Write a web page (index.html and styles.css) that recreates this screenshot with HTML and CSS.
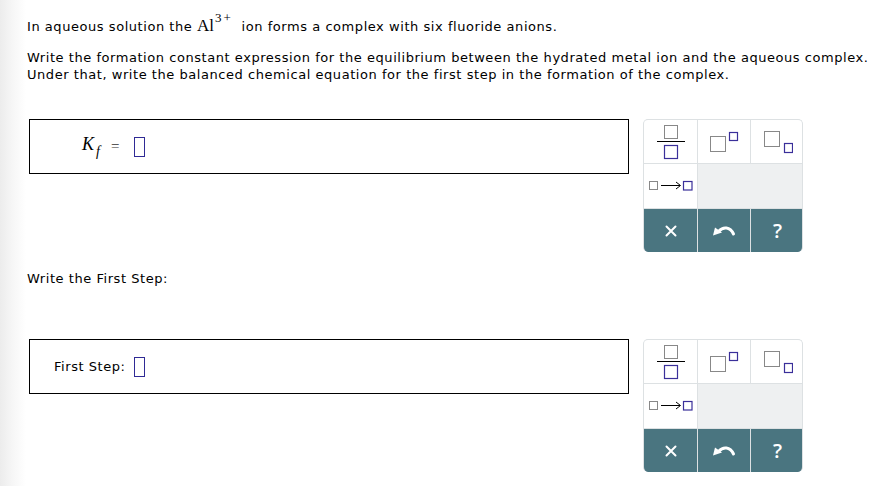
FILE: index.html
```html
<!DOCTYPE html>
<html>
<head>
<meta charset="utf-8">
<link rel="stylesheet" href="styles.css">
</head>
<body>
<div class="page">
  <p class="intro">In aqueous solution the <span class="chem">Al<sup>3+</sup></span> ion forms a complex with six fluoride anions.</p>
  <p class="task">Write the formation constant expression for the equilibrium between the hydrated metal ion and the aqueous complex.<br>Under that, write the balanced chemical equation for the first step in the formation of the complex.</p>

  <div class="answer-row first">
    <div class="answer-box">
      <span class="kf"><i>K</i><sub><i>f</i></sub></span>
      <span class="eq">=</span>
      <span class="slot"></span>
    </div>
    <div class="toolbar">
      <div class="cell">
        <svg width="30" height="36" viewBox="0 0 30 36"><rect x="8.5" y="1.5" width="13" height="13" fill="none" stroke="#888" stroke-width="1"/><line x1="1" y1="17.5" x2="29" y2="17.5" stroke="#000" stroke-width="1.2"/><rect x="8.5" y="21.5" width="13" height="13" fill="none" stroke="#3a2f9a" stroke-width="1.2"/></svg>
      </div>
      <div class="cell">
        <svg width="30" height="22" viewBox="0 0 30 22"><rect x="1.5" y="5.5" width="15" height="15" fill="none" stroke="#888" stroke-width="1"/><rect x="20.5" y="1.5" width="8" height="8" fill="none" stroke="#3a2f9a" stroke-width="1.2"/></svg>
      </div>
      <div class="cell">
        <svg width="30" height="24" viewBox="0 0 30 24"><rect x="1.5" y="1.5" width="15" height="15" fill="none" stroke="#888" stroke-width="1"/><rect x="21.5" y="13.5" width="8" height="9" fill="none" stroke="#3a2f9a" stroke-width="1.2"/></svg>
      </div>
      <div class="cell">
        <svg width="44" height="12" viewBox="0 0 44 12"><rect x="0.5" y="1.5" width="8" height="8" fill="none" stroke="#888" stroke-width="1"/><line x1="12" y1="5.5" x2="31" y2="5.5" stroke="#000" stroke-width="1"/><polyline points="27,2 31.5,5.5 27,9" fill="none" stroke="#000" stroke-width="1"/><rect x="34.5" y="1.5" width="8.5" height="8.5" fill="none" stroke="#3a2f9a" stroke-width="1.2"/></svg>
      </div>
      <div class="cell empty"></div>
      <div class="cell act">
        <svg width="12" height="12" viewBox="0 0 12 12"><path d="M1.5 1.5 L10.5 10.5 M10.5 1.5 L1.5 10.5" stroke="#fff" stroke-width="2" stroke-linecap="round"/></svg>
      </div>
      <div class="cell act">
        <svg width="24" height="13" viewBox="0 0 24 13"><path d="M7 7 C11 2.5 18 2.5 21.5 10" fill="none" stroke="#fff" stroke-width="3" stroke-linecap="round"/><path d="M1 11.5 L3 3.5 L10 8.5 Z" fill="#fff"/></svg>
      </div>
      <div class="cell act q">?</div>
    </div>
  </div>

  <p class="step-label">Write the First Step:</p>

  <div class="answer-row second">
    <div class="answer-box">
      <span class="label">First Step:</span>
      <span class="slot"></span>
    </div>
    <div class="toolbar">
      <div class="cell">
        <svg width="30" height="36" viewBox="0 0 30 36"><rect x="8.5" y="1.5" width="13" height="13" fill="none" stroke="#888" stroke-width="1"/><line x1="1" y1="17.5" x2="29" y2="17.5" stroke="#000" stroke-width="1.2"/><rect x="8.5" y="21.5" width="13" height="13" fill="none" stroke="#3a2f9a" stroke-width="1.2"/></svg>
      </div>
      <div class="cell">
        <svg width="30" height="22" viewBox="0 0 30 22"><rect x="1.5" y="5.5" width="15" height="15" fill="none" stroke="#888" stroke-width="1"/><rect x="20.5" y="1.5" width="8" height="8" fill="none" stroke="#3a2f9a" stroke-width="1.2"/></svg>
      </div>
      <div class="cell">
        <svg width="30" height="24" viewBox="0 0 30 24"><rect x="1.5" y="1.5" width="15" height="15" fill="none" stroke="#888" stroke-width="1"/><rect x="21.5" y="13.5" width="8" height="9" fill="none" stroke="#3a2f9a" stroke-width="1.2"/></svg>
      </div>
      <div class="cell">
        <svg width="44" height="12" viewBox="0 0 44 12"><rect x="0.5" y="1.5" width="8" height="8" fill="none" stroke="#888" stroke-width="1"/><line x1="12" y1="5.5" x2="31" y2="5.5" stroke="#000" stroke-width="1"/><polyline points="27,2 31.5,5.5 27,9" fill="none" stroke="#000" stroke-width="1"/><rect x="34.5" y="1.5" width="8.5" height="8.5" fill="none" stroke="#3a2f9a" stroke-width="1.2"/></svg>
      </div>
      <div class="cell empty"></div>
      <div class="cell act">
        <svg width="12" height="12" viewBox="0 0 12 12"><path d="M1.5 1.5 L10.5 10.5 M10.5 1.5 L1.5 10.5" stroke="#fff" stroke-width="2" stroke-linecap="round"/></svg>
      </div>
      <div class="cell act">
        <svg width="24" height="13" viewBox="0 0 24 13"><path d="M7 7 C11 2.5 18 2.5 21.5 10" fill="none" stroke="#fff" stroke-width="3" stroke-linecap="round"/><path d="M1 11.5 L3 3.5 L10 8.5 Z" fill="#fff"/></svg>
      </div>
      <div class="cell act q">?</div>
    </div>
  </div>
</div>
</body>
</html>
```

FILE: styles.css
```css
html, body {
  margin: 0;
  padding: 0;
  background: #fff;
}
body {
  background: linear-gradient(to right, #ececec 0px, #f6f6f6 12px, #ffffff 26px);
  min-height: 486px;
  font-family: "DejaVu Sans", Verdana, sans-serif;
  font-size: 13px;
  letter-spacing: 0.55px;
  color: #000;
}
.page {
  padding: 13px 0 0 27px;
}
p {
  margin: 0;
}
.intro {
  line-height: 26px;
}
.chem {
  font-family: "Liberation Serif", "Times New Roman", serif;
  font-size: 17px;
  letter-spacing: 0;
}
.chem sup {
  font-size: 13px;
  vertical-align: 9px;
  line-height: 0;
  margin-left: 1px;
  margin-right: 4px;
  letter-spacing: 2px;
}
.task {
  margin-top: 9px;
  line-height: 17px;
}
.answer-row {
  display: flex;
  align-items: flex-start;
  gap: 14px;
  margin-left: 2px;
}
.answer-row.first {
  margin-top: 36px;
}
.answer-row.second {
  margin-top: 50px;
}
.answer-box {
  width: 600px;
  height: 55px;
  border: 1px solid #000;
  display: flex;
  align-items: center;
  box-sizing: border-box;
}
.kf {
  font-family: "Liberation Serif", "Times New Roman", serif;
  font-size: 18px;
  margin-left: 52px;
  line-height: 1;
  letter-spacing: 0;
}
.kf sub {
  font-size: 14px;
  vertical-align: -6px;
  margin-left: 2px;
}
.eq {
  font-family: "Liberation Serif", "Times New Roman", serif;
  font-size: 15px;
  margin-left: 11px;
  color: #333;
}
.slot {
  display: inline-block;
  width: 9px;
  height: 18px;
  border: 1px solid #2f2a95;
  margin-left: 14px;
}
.label {
  margin-left: 24px;
}
.second .slot {
  margin-left: 8px;
}
.toolbar {
  width: 160px;
  height: 133px;
  display: grid;
  grid-template-columns: 53px 52px 53px;
  grid-template-rows: 43px 44px 43px;
  border-radius: 5px;
  overflow: hidden;
  border: 1px solid #dde1e3;
  border-bottom: none;
  box-sizing: border-box;
  background: #dde1e3;
  gap: 1px;
}
.cell {
  background: #fff;
  display: flex;
  align-items: center;
  justify-content: center;
}
.cell.empty {
  grid-column: span 2;
  background: #eef0f1;
}
.cell.act {
  background: #4a7580;
  color: #fff;
}
.cell.q {
  font-family: "Open Sans", "DejaVu Sans", sans-serif;
  font-size: 20px;
  font-weight: 600;
  letter-spacing: 0;
}
.step-label {
  margin-top: 17px;
  line-height: 20px;
}
```
